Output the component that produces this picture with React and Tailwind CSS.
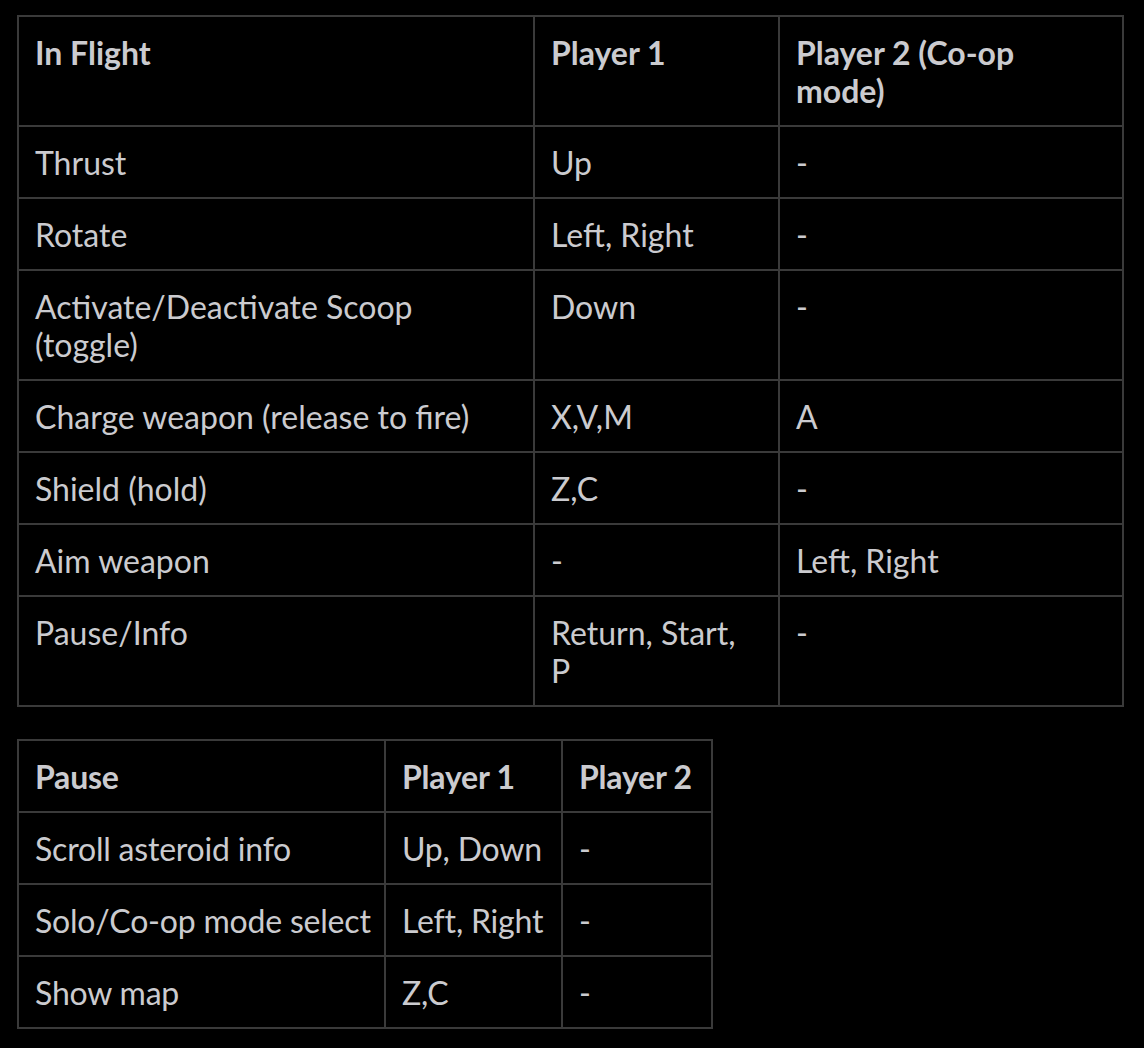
const FLIGHT = [
  ['Thrust', 'Up', '-'],
  ['Rotate', 'Left, Right', '-'],
  [<>Activate/Deactivate Scoop<br />(toggle)</>, 'Down', '-'],
  ['Charge weapon (release to fire)', 'X,V,M', 'A'],
  ['Shield (hold)', 'Z,C', '-'],
  ['Aim weapon', '-', 'Left, Right'],
  ['Pause/Info', <>Return, Start,<br />P</>, '-'],
];

const PAUSE = [
  ['Scroll asteroid info', 'Up, Down', '-'],
  ['Solo/Co-op mode select', 'Left, Right', '-'],
  ['Show map', 'Z,C', '-'],
];

const cell = 'border-2 border-[#3a3a3a] px-[16px] pt-[17px] pb-[15px] align-top text-left whitespace-nowrap';

function ControlsTable({ head, rows, widths, className }) {
  return (
    <table className={'border-collapse table-fixed ' + className}>
      <colgroup>
        {widths.map((w, i) => <col key={i} style={{ width: w }} />)}
      </colgroup>
      <thead>
        <tr>
          {head.map((h, i) => <th key={i} className={cell + ' font-bold'}>{h}</th>)}
        </tr>
      </thead>
      <tbody>
        {rows.map((r, j) => (
          <tr key={j}>
            {r.map((c, i) => <td key={i} className={cell + ' font-normal'}>{c}</td>)}
          </tr>
        ))}
      </tbody>
    </table>
  );
}

export default function App() {
  return (
    <div className="min-h-[1048px] bg-black pl-[17px] pt-[15px] text-[#cbcbcf] text-[32px] leading-[38px] font-['Lato',sans-serif]">
      <ControlsTable
        className="w-[1105px]"
        widths={[516, 245, 344]}
        head={['In Flight', 'Player 1', <>Player 2 (Co-op<br />mode)</>]}
        rows={FLIGHT}
      />
      <ControlsTable
        className="mt-[32px] w-[694px] tracking-[-0.2px]"
        widths={[367, 177, 150]}
        head={['Pause', 'Player 1', 'Player 2']}
        rows={PAUSE}
      />
    </div>
  );
}
